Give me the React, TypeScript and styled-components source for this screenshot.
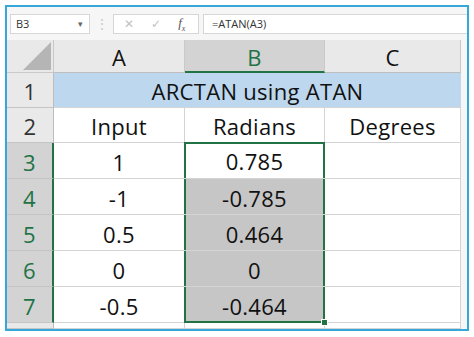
import styled, { createGlobalStyle, css } from 'styled-components';

type HeadProps = {
  selected?: boolean;
}

type CellProps = {
  shaded?: boolean;
  picked?: 'top' | 'middle' | 'bottom';
}

const ROWS = [
  { n: 3, input: '1', radians: '0.785' },
  { n: 4, input: '-1', radians: '-0.785' },
  { n: 5, input: '0.5', radians: '0.464' },
  { n: 6, input: '0', radians: '0' },
  { n: 7, input: '-0.5', radians: '-0.464' },
];

const GREEN = '#217346';

const GlobalStyle = createGlobalStyle`
  body {
    margin: 0;
    background: #ffffff;
    font-family: "Open Sans", "Liberation Sans", sans-serif;
  }
`;

const App = () => (
  <>
    <GlobalStyle />
    <Frame>
      <Toolbar>
        <NameBox>
          <span>B3</span>
          <Caret>▾</Caret>
        </NameBox>
        <Grip>⋮</Grip>
        <FxButtons>
          <ToolGlyph>✕</ToolGlyph>
          <ToolGlyph>✓</ToolGlyph>
          <FxGlyph>f<sub>x</sub></FxGlyph>
        </FxButtons>
        <FormulaInput>=ATAN(A3)</FormulaInput>
      </Toolbar>

      <Sheet>
        <Corner>
          <svg width="28" height="28" viewBox="0 0 28 28">
            <polygon points="28,0 28,28 0,28" fill="#b5b5b5" />
          </svg>
        </Corner>
        <ColHead>A</ColHead>
        <ColHead selected>B</ColHead>
        <ColHead>C</ColHead>
        <Filler />

        <RowHead>1</RowHead>
        <TitleCell>ARCTAN using ATAN</TitleCell>
        <Filler />

        <RowHead>2</RowHead>
        <Cell>Input</Cell>
        <Cell>Radians</Cell>
        <Cell>Degrees</Cell>
        <Filler />

        {ROWS.map((row, i) => {
          const first = i === 0;
          const last = i === ROWS.length - 1;
          return (
            <Row key={row.n}>
              <RowHead selected>{row.n}</RowHead>
              <Cell>{row.input}</Cell>
              <Cell
                shaded={!first}
                picked={first ? 'top' : last ? 'bottom' : 'middle'}
              >
                {row.radians}
                {last && <Handle />}
              </Cell>
              <Cell />
              <Filler />
            </Row>
          );
        })}

        <RowHead />
        <Cell />
        <Cell />
        <Cell />
        <Filler />
      </Sheet>
    </Frame>
  </>
);
export default App;

const Frame = styled.div`
  box-sizing: border-box;
  width: 464px;
  height: 326px;
  margin: 5px 0 0 5px;
  border: 2px solid #35a8d9;
  background: #f6f6f6;
  display: flex;
  flex-direction: column;
  overflow: hidden;
`;

const Toolbar = styled.div`
  height: 33px;
  display: flex;
  align-items: center;
  padding-left: 3px;
  background: #f6f6f6;
  font-size: 11px;
  color: #333;
`;

const Box = styled.div`
  box-sizing: border-box;
  height: 20px;
  background: #ffffff;
  border: 1px solid #d6d6d6;
  display: flex;
  align-items: center;
`;

const NameBox = styled(Box)`
  width: 80px;
  padding: 0 6px 0 5px;
  justify-content: space-between;
`;

const Caret = styled.span`
  font-size: 9px;
  color: #666;
`;

const Grip = styled.span`
  width: 23px;
  text-align: center;
  color: #c4c4c4;
  font-size: 12px;
`;

const FxButtons = styled(Box)`
  width: 86px;
  padding-left: 10px;
  gap: 17px;
`;

const ToolGlyph = styled.span`
  font-family: "DejaVu Sans", sans-serif;
  color: #c2c2c2;
  font-size: 12px;
`;

const FxGlyph = styled.span`
  font-family: "Liberation Serif", serif;
  font-style: italic;
  color: #555;
  font-size: 13px;

  sub {
    font-size: 8px;
  }
`;

const FormulaInput = styled(Box)`
  flex: 1;
  margin-left: 4px;
  padding-left: 8px;
  border-right: none;
`;

const Sheet = styled.div`
  flex: 1;
  display: grid;
  grid-template-columns: 47px 131px 140px 136px 1fr;
  grid-template-rows: 33px 35px 35px repeat(5, 36px) 1fr;
  font-size: 22px;
  letter-spacing: 0.3px;
  color: #111;
`;

const Row = styled.div`
  display: contents;
`;

const Corner = styled.div`
  background: #e9e9e9;
  border-right: 1px solid #c9c9c9;
  border-bottom: 1px solid #c9c9c9;
  display: flex;
  align-items: flex-end;
  justify-content: flex-end;
  padding: 0 2px 2px 0;
`;

const Centered = styled.div`
  box-sizing: border-box;
  display: flex;
  align-items: center;
  justify-content: center;
  padding-top: 2px;
`;

const ColHead = styled(Centered)<HeadProps>`
  background: ${({ selected }) => (selected ? '#d3d3d3' : '#e9e9e9')};
  color: ${({ selected }) => (selected ? GREEN : '#111')};
  border-right: 1px solid #c9c9c9;
  border-bottom: ${({ selected }) => (selected ? `2px solid ${GREEN}` : '1px solid #bdbdbd')};
`;

const RowHead = styled(Centered)<HeadProps>`
  background: ${({ selected }) => (selected ? '#d3d3d3' : '#e9e9e9')};
  color: ${({ selected }) => (selected ? GREEN : '#333')};
  border-bottom: 1px solid #c4c4c4;
  border-right: ${({ selected }) => (selected ? `2px solid ${GREEN}` : '1px solid #bdbdbd')};
`;

const pickedEdges = {
  top: `inset 2px 0 0 ${GREEN}, inset -2px 0 0 ${GREEN}, inset 0 2px 0 ${GREEN}`,
  middle: `inset 2px 0 0 ${GREEN}, inset -2px 0 0 ${GREEN}`,
  bottom: `inset 2px 0 0 ${GREEN}, inset -2px 0 0 ${GREEN}, inset 0 -2px 0 ${GREEN}`,
};

const Cell = styled(Centered)<CellProps>`
  position: relative;
  background: ${({ shaded }) => (shaded ? '#c6c6c6' : '#ffffff')};
  border-right: 1px solid #d4d4d4;
  border-bottom: 1px solid #d4d4d4;

  ${({ picked }) => picked && css`
    margin-left: -1px;
    border-right: none;
    box-shadow: ${pickedEdges[picked]};
  `}
  ${({ picked }) => picked === 'top' && css`
    margin-top: -1px;
  `}
  ${({ picked }) => picked === 'bottom' && css`
    border-bottom: none;
  `}
`;

const TitleCell = styled(Centered)`
  grid-column: 2 / span 3;
  background: #bdd7ee;
  border-bottom: 1px solid #d4d4d4;
`;

const Filler = styled.div`
  background: #f6f6f6;
`;

const Handle = styled.div`
  position: absolute;
  right: -3px;
  bottom: -3px;
  width: 5px;
  height: 5px;
  background: ${GREEN};
  border: 1px solid #ffffff;
  z-index: 1;
`;
